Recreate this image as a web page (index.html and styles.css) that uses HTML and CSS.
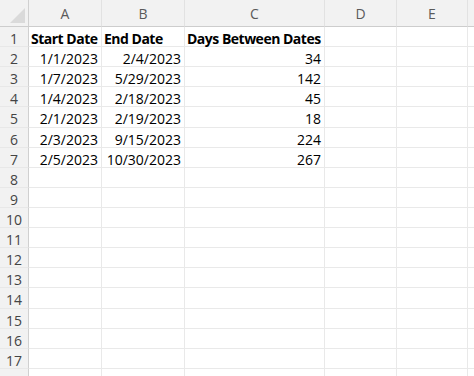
FILE: index.html
```html
<!DOCTYPE html>
<html>
<head>
    <meta name="viewport" content="width=device-width, initial-scale=1">
    <title>Days Between Dates</title>
    <link rel="stylesheet" href="styles.css">
</head>

<body>
    <div class="sheet">
        <div class="corner"><span class="corner-mark"></span></div>
        <div class="col-head">A</div>
        <div class="col-head">B</div>
        <div class="col-head">C</div>
        <div class="col-head">D</div>
        <div class="col-head">E</div>
        <div class="col-head"></div>

        <div class="row-head">1</div>
        <div class="cell bold">Start Date</div>
        <div class="cell bold">End Date</div>
        <div class="cell bold">Days Between Dates</div>
        <div class="cell"></div><div class="cell"></div><div class="cell"></div>

        <div class="row-head">2</div>
        <div class="cell num">1/1/2023</div>
        <div class="cell num">2/4/2023</div>
        <div class="cell num">34</div>
        <div class="cell"></div><div class="cell"></div><div class="cell"></div>

        <div class="row-head">3</div>
        <div class="cell num">1/7/2023</div>
        <div class="cell num">5/29/2023</div>
        <div class="cell num">142</div>
        <div class="cell"></div><div class="cell"></div><div class="cell"></div>

        <div class="row-head">4</div>
        <div class="cell num">1/4/2023</div>
        <div class="cell num">2/18/2023</div>
        <div class="cell num">45</div>
        <div class="cell"></div><div class="cell"></div><div class="cell"></div>

        <div class="row-head">5</div>
        <div class="cell num">2/1/2023</div>
        <div class="cell num">2/19/2023</div>
        <div class="cell num">18</div>
        <div class="cell"></div><div class="cell"></div><div class="cell"></div>

        <div class="row-head">6</div>
        <div class="cell num">2/3/2023</div>
        <div class="cell num">9/15/2023</div>
        <div class="cell num">224</div>
        <div class="cell"></div><div class="cell"></div><div class="cell"></div>

        <div class="row-head">7</div>
        <div class="cell num">2/5/2023</div>
        <div class="cell num">10/30/2023</div>
        <div class="cell num">267</div>
        <div class="cell"></div><div class="cell"></div><div class="cell"></div>

        <div class="row-head">8</div>
        <div class="cell"></div><div class="cell"></div><div class="cell"></div><div class="cell"></div><div class="cell"></div><div class="cell"></div>
        <div class="row-head">9</div>
        <div class="cell"></div><div class="cell"></div><div class="cell"></div><div class="cell"></div><div class="cell"></div><div class="cell"></div>
        <div class="row-head">10</div>
        <div class="cell"></div><div class="cell"></div><div class="cell"></div><div class="cell"></div><div class="cell"></div><div class="cell"></div>
        <div class="row-head">11</div>
        <div class="cell"></div><div class="cell"></div><div class="cell"></div><div class="cell"></div><div class="cell"></div><div class="cell"></div>
        <div class="row-head">12</div>
        <div class="cell"></div><div class="cell"></div><div class="cell"></div><div class="cell"></div><div class="cell"></div><div class="cell"></div>
        <div class="row-head">13</div>
        <div class="cell"></div><div class="cell"></div><div class="cell"></div><div class="cell"></div><div class="cell"></div><div class="cell"></div>
        <div class="row-head">14</div>
        <div class="cell"></div><div class="cell"></div><div class="cell"></div><div class="cell"></div><div class="cell"></div><div class="cell"></div>
        <div class="row-head">15</div>
        <div class="cell"></div><div class="cell"></div><div class="cell"></div><div class="cell"></div><div class="cell"></div><div class="cell"></div>
        <div class="row-head">16</div>
        <div class="cell"></div><div class="cell"></div><div class="cell"></div><div class="cell"></div><div class="cell"></div><div class="cell"></div>
        <div class="row-head">17</div>
        <div class="cell"></div><div class="cell"></div><div class="cell"></div><div class="cell"></div><div class="cell"></div><div class="cell"></div>
        <div class="row-head"></div>
        <div class="cell"></div><div class="cell"></div><div class="cell"></div><div class="cell"></div><div class="cell"></div><div class="cell"></div>
    </div>
</body>

</html>
```

FILE: styles.css
```css
body {
    margin: 0;
    background-color: white;
    overflow: hidden;
    font-family: "Open Sans", "Noto Sans", sans-serif;
}

.sheet {
    display: grid;
    grid-template-columns: 29px 73px 83px 140px 72px 71px 1fr;
    grid-template-rows: 27px repeat(18, 20.12px);
    width: 474px;
    height: 376px;
    overflow: hidden;
}

.corner {
    position: relative;
    background-color: #f2f2f2;
    border-right: 1px solid #d0d0d0;
    border-bottom: 1px solid #cdcdcd;
}

.corner-mark {
    position: absolute;
    right: 3px;
    bottom: 3px;
    width: 0;
    height: 0;
    border-left: 15px solid transparent;
    border-bottom: 15px solid #dadada;
}

.col-head {
    background-color: #f2f2f2;
    border-right: 1px solid #e2e2e2;
    border-bottom: 1px solid #cdcdcd;
    color: #5a5a5a;
    font-size: 14px;
    text-align: center;
    line-height: 26px;
    padding-top: 1px;
}

.row-head {
    background-color: #f2f2f2;
    border-right: 1px solid #d0d0d0;
    border-bottom: 1px solid #e8e8e8;
    color: #444;
    font-size: 14px;
    text-align: center;
    line-height: 16px;
    padding-top: 4px;
}

.cell {
    border-right: 1px solid #e9e9e9;
    border-bottom: 1px solid #e9e9e9;
    padding: 4px 3px 0;
    font-size: 14px;
    line-height: 16px;
    color: #000;
    white-space: nowrap;
    overflow: visible;
}

.bold {
    font-weight: bold;
    letter-spacing: -0.5px;
    padding-left: 2px;
}

.num {
    text-align: right;
}
```
